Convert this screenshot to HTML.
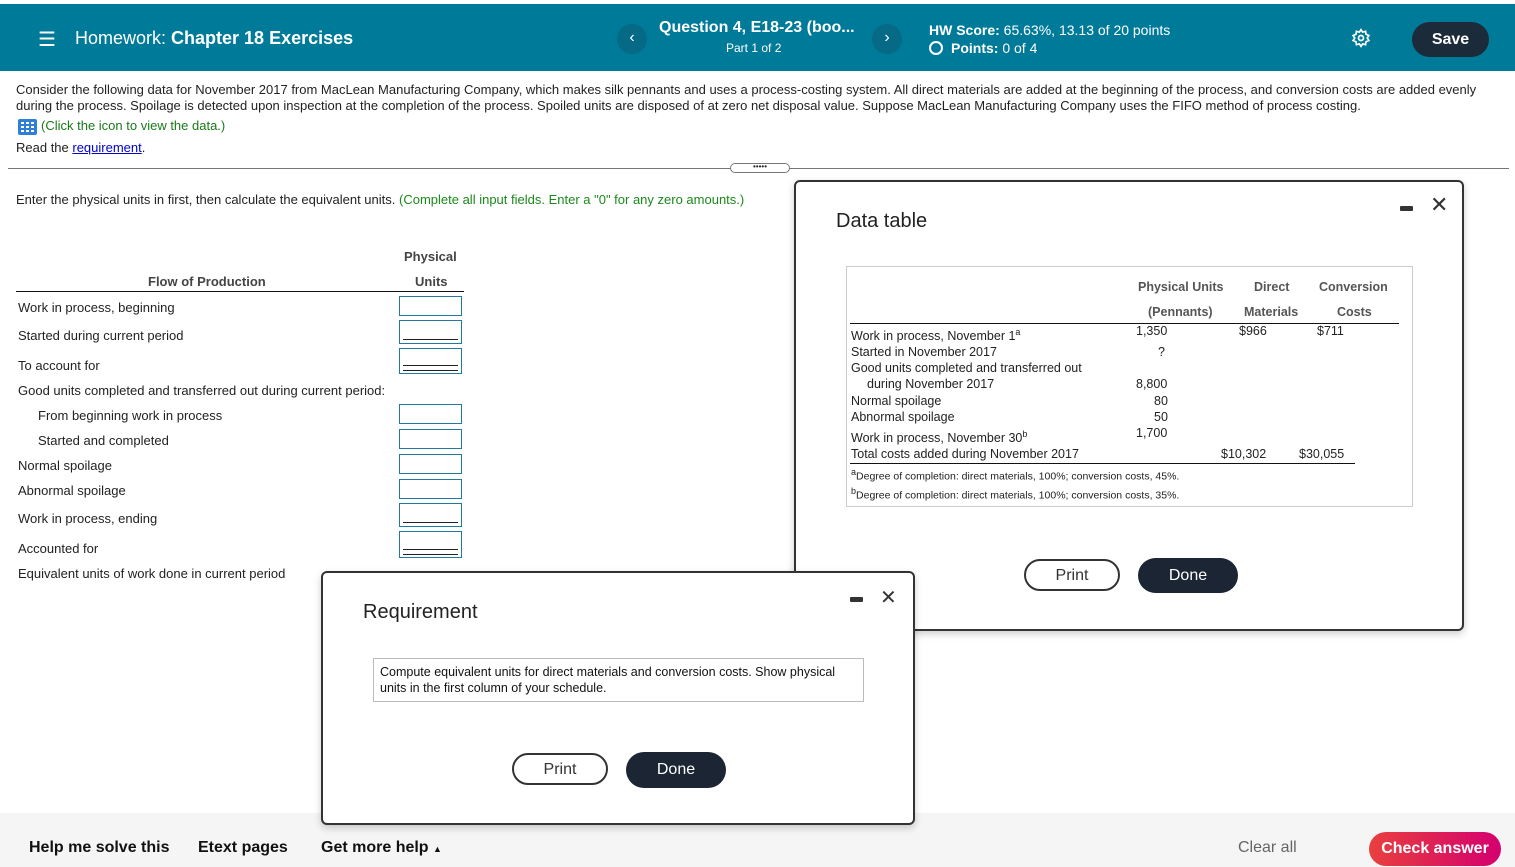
<!DOCTYPE html>
<html><head><meta charset="utf-8"><style>
*{box-sizing:border-box;margin:0;padding:0}
body{width:1515px;height:867px;position:relative;overflow:hidden;background:#fff;font-family:"Liberation Sans",Arial,sans-serif;color:#222;font-size:13px}
.a{position:absolute;white-space:nowrap}
.hdr{position:absolute;left:0;top:4px;width:1515px;height:67px;background:#007a99;color:#fff}
.circ{position:absolute;width:30px;height:30px;border-radius:50%;background:#066a86;color:#fff;font-size:16px;text-align:center;line-height:28px}
.box{position:absolute;left:399px;width:63px;border:1px solid #1f7a9b;height:20px}
.u1::after{content:"";position:absolute;left:3px;right:3px;bottom:3px;border-top:1px solid #222}
.u2::after{content:"";position:absolute;left:3px;right:3px;bottom:2px;height:4px;border-top:1px solid #222;border-bottom:1px solid #222}
.modal{position:absolute;background:#fff;border:2px solid #333;border-radius:6px;box-shadow:0 3px 8px rgba(0,0,0,.2)}
.btn{position:absolute;border-radius:18px;text-align:center;font-size:16px}
.dt{font-size:12.5px;color:#222}
sup{font-size:9px}
</style></head><body>
<div class="hdr">
 <div class="a" style="left:38px;top:23px;font-size:20px">☰</div>
 <div class="a" style="left:75px;top:24px;font-size:18px">Homework: <b>Chapter 18 Exercises</b></div>
 <div class="circ" style="left:617px;top:20px">‹</div>
 <div class="a" style="left:659px;top:15px;font-size:16px;font-weight:bold">Question 4, E18-23 (boo...</div>
 <div class="a" style="left:726px;top:37px;font-size:12px">Part 1 of 2</div>
 <div class="circ" style="left:872px;top:20px">›</div>
 <div class="a" style="left:929px;top:18px;font-size:14px"><b>HW Score:</b> 65.63%, 13.13 of 20 points</div>
 <div class="a" style="left:929px;top:36px;font-size:14px"><span style="display:inline-block;width:14px;height:14px;border:2px solid #fff;border-radius:50%;vertical-align:-2px;margin-right:8px"></span><b>Points:</b> 0 of 4</div>
 <svg class="a" style="left:1351px;top:24px" width="20" height="20" viewBox="0 0 24 24" fill="none" stroke="#fff" stroke-width="2"><circle cx="12" cy="12" r="3"/><path d="M12 2l2 3 3.5-1 .5 3.5 3.5 1.5-2 3 2 3-3.5 1.5-.5 3.5-3.5-1-2 3-2-3-3.5 1-.5-3.5L2.5 15l2-3-2-3L6 7.5 6.5 4 10 5z"/></svg>
 <div class="btn" style="left:1412px;top:18px;width:77px;height:35px;line-height:35px;background:#1b2b3a;color:#fff;font-weight:bold">Save</div>
</div>
<div class="a" style="left:16px;top:82px;font-size:13px;line-height:16px;white-space:normal;width:1470px">Consider the following data for November 2017 from MacLean Manufacturing Company, which makes silk pennants and uses a process-costing system. All direct materials are added at the beginning of the process, and conversion costs are added evenly during the process. Spoilage is detected upon inspection at the completion of the process. Spoiled units are disposed of at zero net disposal value. Suppose MacLean Manufacturing Company uses the FIFO method of process costing.</div>
<svg class="a" style="left:18px;top:119px" width="19" height="16" viewBox="0 0 19 16"><rect width="19" height="16" rx="2" fill="#2f7fd8"/><g fill="#fff"><rect x="3" y="3" width="3" height="2"/><rect x="8" y="3" width="3" height="2"/><rect x="13" y="3" width="3" height="2"/><rect x="3" y="7" width="3" height="2"/><rect x="8" y="7" width="3" height="2"/><rect x="13" y="7" width="3" height="2"/><rect x="3" y="11" width="3" height="2"/><rect x="8" y="11" width="3" height="2"/><rect x="13" y="11" width="3" height="2"/></g></svg>
<div class="a" style="left:41px;top:118px;color:#1a7a1a;font-size:13px">(Click the icon to view the data.)</div>
<div class="a" style="left:16px;top:140px;font-size:13px">Read the <span style="color:#00c;text-decoration:underline">requirement</span>.</div>
<div class="a" style="left:8px;top:168px;width:1501px;border-top:1px solid #777"></div>
<div class="a" style="left:730px;top:163px;width:60px;height:10px;border:1px solid #777;border-radius:5px;background:#fff;font-size:8px;line-height:6px;text-align:center">•••••</div>
<div class="a" style="left:16px;top:192px;font-size:13px">Enter the physical units in first, then calculate the equivalent units. <span style="color:#1a8a1a">(Complete all input fields. Enter a "0" for any zero amounts.)</span></div>
<div class="a" style="left:404px;top:249px;font-weight:bold;color:#444">Physical</div>
<div class="a" style="left:148px;top:274px;font-weight:bold;color:#444">Flow of Production</div>
<div class="a" style="left:415px;top:274px;font-weight:bold;color:#444">Units</div>
<div class="a" style="left:16px;top:291px;width:448px;border-top:1px solid #111"></div>
<div class="a" style="left:18px;top:300px">Work in process, beginning</div>
<div class="a" style="left:18px;top:328px">Started during current period</div>
<div class="a" style="left:18px;top:358px">To account for</div>
<div class="a" style="left:18px;top:383px">Good units completed and transferred out during current period:</div>
<div class="a" style="left:38px;top:408px">From beginning work in process</div>
<div class="a" style="left:38px;top:433px">Started and completed</div>
<div class="a" style="left:18px;top:458px">Normal spoilage</div>
<div class="a" style="left:18px;top:483px">Abnormal spoilage</div>
<div class="a" style="left:18px;top:511px">Work in process, ending</div>
<div class="a" style="left:18px;top:541px">Accounted for</div>
<div class="a" style="left:18px;top:566px">Equivalent units of work done in current period</div>
<div class="box" style="top:296px"></div>
<div class="box u1" style="top:320px;height:24px"></div>
<div class="box u2" style="top:348px;height:26px"></div>
<div class="box" style="top:404px"></div>
<div class="box" style="top:429px"></div>
<div class="box" style="top:454px"></div>
<div class="box" style="top:479px"></div>
<div class="box u1" style="top:503px;height:24px"></div>
<div class="box u2" style="top:531px;height:27px"></div>

<div class="modal" style="left:794px;top:180px;width:670px;height:451px">
 <div class="a" style="left:40px;top:28px;font-size:20px;color:#222">Data table</div>
 <div class="a" style="left:604px;top:24px;width:13px;height:5px;background:#333;border-radius:1px"></div>
 <div class="a" style="left:634px;top:10px;font-size:22px;color:#333">✕</div>
 <div class="a" style="left:50px;top:84px;width:567px;height:241px;border:1px solid #ccc"></div>
 <div class="a dt" style="left:342px;top:98px;font-weight:bold;color:#555">Physical Units</div>
 <div class="a dt" style="left:458px;top:98px;font-weight:bold;color:#555">Direct</div>
 <div class="a dt" style="left:523px;top:98px;font-weight:bold;color:#555">Conversion</div>
 <div class="a dt" style="left:352px;top:123px;font-weight:bold;color:#555">(Pennants)</div>
 <div class="a dt" style="left:448px;top:123px;font-weight:bold;color:#555">Materials</div>
 <div class="a dt" style="left:541px;top:123px;font-weight:bold;color:#555">Costs</div>
 <div class="a" style="left:54px;top:141px;width:549px;border-top:1px solid #111"></div>
 <div class="a dt" style="left:55px;top:145px">Work in process, November 1<sup>a</sup></div>
 <div class="a dt" style="left:55px;top:163px">Started in November 2017</div>
 <div class="a dt" style="left:55px;top:179px">Good units completed and transferred out</div>
 <div class="a dt" style="left:71px;top:195px">during November 2017</div>
 <div class="a dt" style="left:55px;top:212px">Normal spoilage</div>
 <div class="a dt" style="left:55px;top:228px">Abnormal spoilage</div>
 <div class="a dt" style="left:55px;top:247px">Work in process, November 30<sup>b</sup></div>
 <div class="a dt" style="left:55px;top:265px">Total costs added during November 2017</div>
 <div class="a dt" style="left:340px;top:142px">1,350</div>
 <div class="a dt" style="left:443px;top:142px">$966</div>
 <div class="a dt" style="left:521px;top:142px">$711</div>
 <div class="a dt" style="left:362px;top:163px">?</div>
 <div class="a dt" style="left:340px;top:195px">8,800</div>
 <div class="a dt" style="left:358px;top:212px">80</div>
 <div class="a dt" style="left:358px;top:228px">50</div>
 <div class="a dt" style="left:340px;top:244px">1,700</div>
 <div class="a dt" style="left:425px;top:265px">$10,302</div>
 <div class="a dt" style="left:503px;top:265px">$30,055</div>
 <div class="a" style="left:54px;top:281px;width:505px;border-top:1px solid #111"></div>
 <div class="a" style="left:55px;top:285px;font-size:10.5px"><sup>a</sup>Degree of completion: direct materials, 100%; conversion costs, 45%.</div>
 <div class="a" style="left:55px;top:304px;font-size:10.5px"><sup>b</sup>Degree of completion: direct materials, 100%; conversion costs, 35%.</div>
 <div class="btn" style="left:228px;top:377px;width:96px;height:32px;line-height:29px;border:2px solid #333;color:#333">Print</div>
 <div class="btn" style="left:342px;top:376px;width:100px;height:35px;line-height:35px;background:#1b2533;color:#fff">Done</div>
</div>

<div class="a" style="left:0;top:813px;width:1515px;height:54px;background:#f5f5f5"></div>
<div class="a" style="left:29px;top:839px;font-size:16px;font-weight:bold;color:#111">Help me solve this</div>
<div class="a" style="left:198px;top:839px;font-size:16px;font-weight:bold;color:#111">Etext pages</div>
<div class="a" style="left:321px;top:839px;font-size:16px;font-weight:bold;color:#111">Get more help <span style="font-size:9px">▲</span></div>
<div class="a" style="left:1238px;top:839px;font-size:16px;color:#666">Clear all</div>
<div class="btn" style="left:1369px;top:832px;width:132px;height:34px;line-height:33px;background:linear-gradient(90deg,#e8403e,#d4006f);color:#fff;font-weight:bold">Check answer</div>

<div class="modal" style="left:321px;top:571px;width:594px;height:254px">
 <div class="a" style="left:40px;top:28px;font-size:20px;color:#222">Requirement</div>
 <div class="a" style="left:527px;top:24px;width:13px;height:5px;background:#333;border-radius:1px"></div>
 <div class="a" style="left:557px;top:12px;font-size:20px;color:#333">✕</div>
 <div class="a" style="left:50px;top:85px;width:491px;height:44px;border:1px solid #bbb;padding:5px 6px;white-space:normal;font-size:12.5px;line-height:16px;color:#111">Compute equivalent units for direct materials and conversion costs. Show physical units in the first column of your schedule.</div>
 <div class="btn" style="left:189px;top:180px;width:96px;height:32px;line-height:29px;border:2px solid #333;color:#333">Print</div>
 <div class="btn" style="left:303px;top:179px;width:100px;height:36px;line-height:36px;background:#1b2533;color:#fff">Done</div>
</div>
</body></html>
